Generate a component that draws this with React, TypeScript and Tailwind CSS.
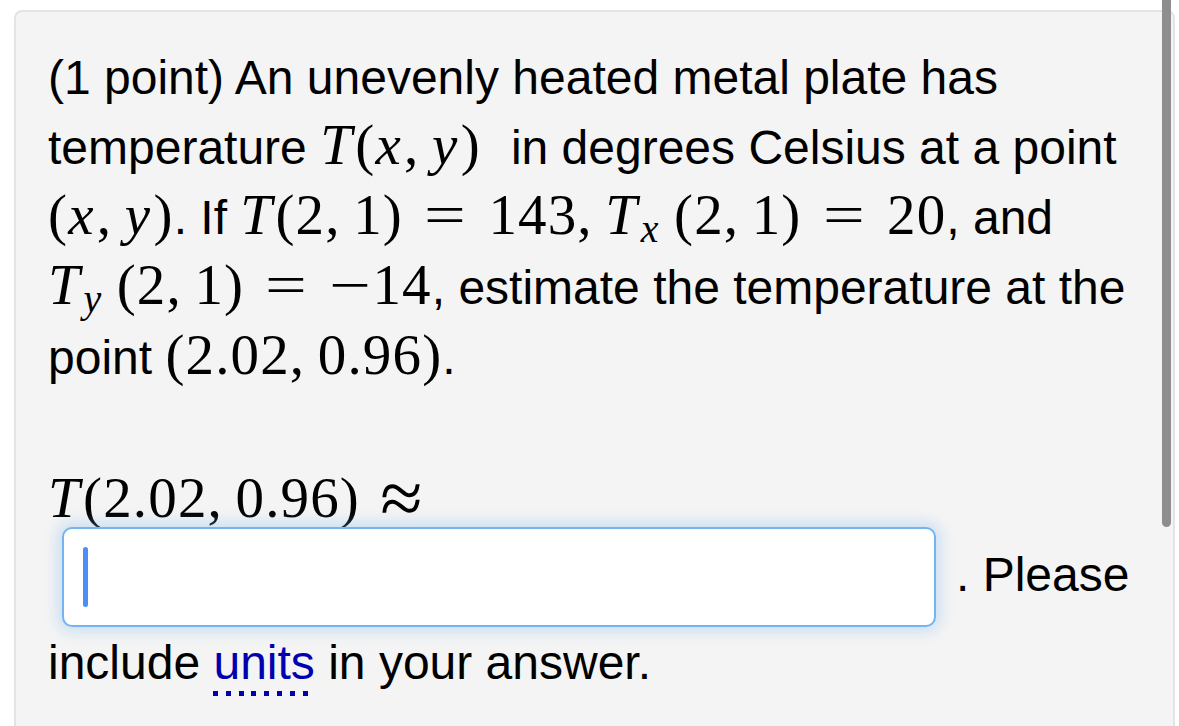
import React from "react";

// math pieces: serif face standing in for the TeX renderer
function M({ children }: { children: React.ReactNode }) {
  return (
    <span className="font-['Liberation_Serif',serif] text-[57px] leading-none tracking-[0.02em]">
      {children}
    </span>
  );
}

function V({ children }: { children: React.ReactNode }) {
  return <i className="italic pr-[0.04em]">{children}</i>;
}

function Sub({ children }: { children: React.ReactNode }) {
  return (
    <i className="relative top-[0.2em] ml-[0.01em] mr-[0.36em] text-[0.7em] italic">
      {children}
    </i>
  );
}

function Rel({ children }: { children: React.ReactNode }) {
  return (
    <span className="inline-block w-[1.5em] text-center">
      <span className="inline-block scale-x-[1.3]">{children}</span>
    </span>
  );
}

const sp = "\u2009";

export default function App() {
  return (
    <div className="h-[726px] w-full overflow-hidden bg-white">
      <div className="relative ml-[14px] mt-[10px] h-[760px] w-[1161px] rounded-[8px] border-2 border-[#e4e4e4] bg-[#f4f4f4] pl-[32px] pt-[31px] font-['Liberation_Sans',Arial,sans-serif] text-[48px] text-black">
        {/* overlay scrollbar */}
        <div className="absolute -top-[12px] right-[2px] h-[527px] w-[9px] rounded-b-[5px] bg-[#8e8e8e]" />

        <div className="whitespace-nowrap leading-[70px]">
          <div>(1 point) An unevenly heated metal plate has</div>
          <div>
            temperature{" "}
            <M>
              <V>T</V>(<V>x</V>,{sp}<V>y</V>)
            </M>
            <span className="ml-[30px]">in degrees Celsius at a point</span>
          </div>
          <div>
            <M>
              (<V>x</V>,{sp}<V>y</V>)
            </M>
            . If{" "}
            <M>
              <V>T</V>(2,{sp}1)<Rel>=</Rel>143,{sp}
              <V>T</V>
              <Sub>x</Sub>(2,{sp}1)<Rel>=</Rel>20
            </M>
            , and
          </div>
          <div>
            <M>
              <V>T</V>
              <Sub>y</Sub>(2,{sp}1)<Rel>=</Rel>
              <span className="inline-block w-[0.75em] text-center">
                <span className="inline-block scale-x-[1.3]">{"\u2212"}</span>
              </span>
              14
            </M>
            , estimate the temperature at the
          </div>
          <div>
            point{" "}
            <M>(2.02,{sp}0.96)</M>.
          </div>
          <div className="h-[73px]" />
          <div>
            <M>
              <V>T</V>(2.02,{sp}0.96)
              <span className="ml-[0.45em] inline-block scale-[1.35]">{"\u2248"}</span>
            </M>
          </div>
        </div>

        <div className="-mt-[9px] flex items-start whitespace-nowrap">
          <div className="ml-[14px] flex h-[100px] w-[874px] items-center rounded-[10px] border-2 border-[#74b4f0] bg-white pl-[19px] shadow-[0_0_14px_5px_rgba(130,185,240,0.35)]">
            <div className="h-[60px] w-[5px] rounded-full bg-[#4a8ff7]" />
          </div>
          <div className="ml-[20px] mt-[13px] leading-[70px]">. Please</div>
        </div>

        <div className="mt-[1px] whitespace-nowrap leading-[70px]">
          include{" "}
          <span className="relative inline-block text-[#0000b0]">
            units
            <span className="absolute left-0 right-0 top-[63px] h-[5px] bg-[repeating-linear-gradient(to_right,#0000b0_0_5px,transparent_5px_12.8px)]" />
          </span>{" "}
          in your answer.
        </div>
      </div>
    </div>
  );
}
